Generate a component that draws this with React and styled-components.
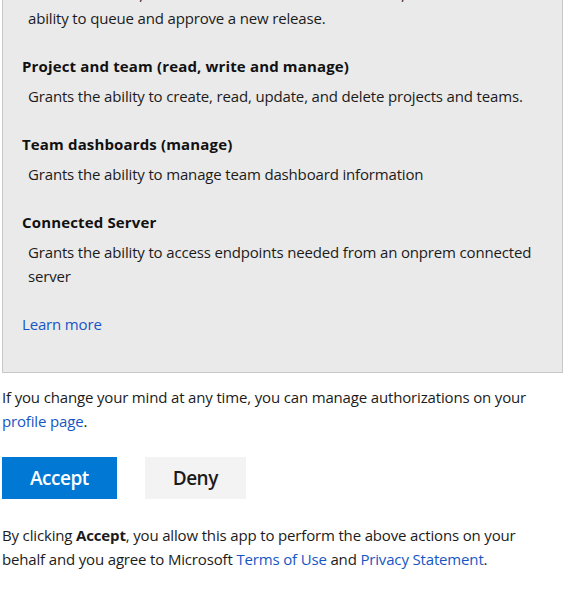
import styled, { createGlobalStyle } from 'styled-components';

const GlobalStyle = createGlobalStyle`
  html, body {
    margin: 0;
    padding: 0;
    background: #ffffff;
  }
  body {
    font-family: "Open Sans", "Noto Sans", sans-serif;
    color: #1b1b1b;
    overflow: hidden;
  }
`;

const Page = styled.div`
  width: 561px;
  padding: 0 2px;
  font-size: 15px;
  line-height: 24px;
  letter-spacing: -0.16px;
`;

// the consent page is scrolled down, so the top of the scope box is cut off
const ScopeBox = styled.div`
  margin-top: -73px;
  border: 1px solid #c8c8c8;
  background: #eaeaea;
  padding: 0 19px 36px;
`;

const Scope = styled.div`
  margin-bottom: 24px;
`;

const ScopeTitle = styled.div`
  font-weight: 700;
  letter-spacing: 0.15px;
  color: #111111;
  margin-bottom: 6px;
`;

const ScopeText = styled.div`
  padding-left: 6px;
`;

const Link = styled.a`
  color: #1656c4;
  text-decoration: none;
  cursor: pointer;
`;

const Note = styled.p`
  max-width: 545px;
  margin: ${(p) => (p.$gap ? '24px' : '12px')} 0 0;
`;

const Buttons = styled.div`
  display: flex;
  gap: 28px;
  margin-top: 24px;
`;

const Button = styled.button`
  height: 42px;
  padding: 0 28px;
  border: none;
  font-family: inherit;
  font-size: 19px;
  font-weight: 600;
  letter-spacing: -0.5px;
  background: ${(p) => (p.$primary ? '#0078d4' : '#f3f3f3')};
  color: ${(p) => (p.$primary ? '#ffffff' : '#1b1b1b')};
  cursor: pointer;
`;

const scopes = [
  {
    title: 'Release (read, write, execute and manage)',
    text: [
      'Grants the ability to read, update, and delete release artifacts,',
      'such as releases, release definitions and environments; also the',
      'ability to queue and approve a new release.',
    ],
  },
  {
    title: 'Project and team (read, write and manage)',
    text: ['Grants the ability to create, read, update, and delete projects and teams.'],
  },
  {
    title: 'Team dashboards (manage)',
    text: ['Grants the ability to manage team dashboard information'],
  },
  {
    title: 'Connected Server',
    text: ['Grants the ability to access endpoints needed from an onprem connected server'],
  },
];

export default function App() {
  return (
    <>
      <GlobalStyle />
      <Page>
        <ScopeBox>
          {scopes.map((s) => (
            <Scope key={s.title}>
              <ScopeTitle>{s.title}</ScopeTitle>
              <ScopeText>
                {s.text.map((line, i) => (
                  <span key={i}>
                    {line}
                    {i < s.text.length - 1 && <br />}
                  </span>
                ))}
              </ScopeText>
            </Scope>
          ))}
          <Link>Learn more</Link>
        </ScopeBox>

        <Note>
          If you change your mind at any time, you can manage authorizations on your{' '}
          <Link>profile page</Link>.
        </Note>

        <Buttons>
          <Button $primary>Accept</Button>
          <Button>Deny</Button>
        </Buttons>

        <Note $gap>
          By clicking <b>Accept</b>, you allow this app to perform the above actions on your
          behalf and you agree to Microsoft <Link>Terms of Use</Link> and{' '}
          <Link>Privacy Statement</Link>.
        </Note>
      </Page>
    </>
  );
}
